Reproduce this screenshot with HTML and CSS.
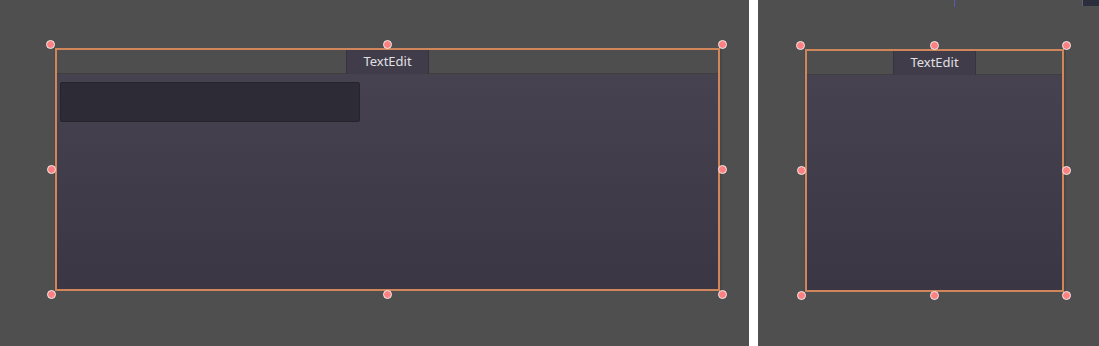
FILE: index.html
```html
<!DOCTYPE html>
<html lang="en">
<head>
<meta charset="UTF-8">
<title>TextEdit</title>
<link rel="stylesheet" href="styles.css">
</head>
<body>
<div class="editor">
    <div class="viewport left">
        <div class="control wide">
            <div class="tabs"><div class="tab">TextEdit</div></div>
            <div class="panel">
                <div class="line-edit"></div>
            </div>
            <span class="handle tl"></span><span class="handle tc"></span><span class="handle tr"></span>
            <span class="handle ml"></span><span class="handle mr"></span>
            <span class="handle bl"></span><span class="handle bc"></span><span class="handle br"></span>
        </div>
    </div>
    <div class="divider"></div>
    <div class="viewport right">
        <span class="guide"></span>
        <span class="corner-widget"></span>
        <div class="control narrow">
            <div class="tabs"><div class="tab">TextEdit</div></div>
            <div class="panel"></div>
            <span class="handle tl"></span><span class="handle tc"></span><span class="handle tr"></span>
            <span class="handle ml"></span><span class="handle mr"></span>
            <span class="handle bl"></span><span class="handle bc"></span><span class="handle br"></span>
        </div>
    </div>
</div>
</body>
</html>
```

FILE: styles.css
```css
html, body {
    margin: 0;
    padding: 0;
    background: #4f4f4f;
    font-family: "Noto Sans", "DejaVu Sans", sans-serif;
}
.editor {
    display: flex;
    width: 1099px;
    height: 346px;
    overflow: hidden;
}
.viewport {
    position: relative;
    background: #4f4f4f;
    box-sizing: border-box;
}
.viewport.left {
    width: 749px;
    padding: 48px 0 0 55px;
}
.viewport.right {
    flex: 1;
    padding: 49px 0 0 47px;
}
.divider {
    width: 9px;
    background: #ffffff;
}
.control {
    position: relative;
    box-sizing: border-box;
    height: 243px;
    border: 2px solid #d0855a;
    display: flex;
    flex-direction: column;
    box-shadow: 2px 0 0 #474747, -1px 0 0 #4a4a4a;
}
.control.wide {
    width: 665px;
}
.control.narrow {
    width: 259px;
}
.tabs {
    height: 23px;
    display: flex;
    justify-content: center;
    border-bottom: 1px solid #3f3f3f;
    background: #4e4e4e;
}
.tab {
    width: 83px;
    height: 24px;
    box-sizing: border-box;
    background: #403c49;
    border-left: 1px solid #36333e;
    border-right: 1px solid #36333e;
    color: #e0e0e4;
    font-size: 13px;
    line-height: 22px;
    text-align: center;
    position: relative;
    z-index: 1;
}
.panel {
    flex: 1;
    background: linear-gradient(#46424f, #3a3643);
}
.line-edit {
    width: 300px;
    height: 40px;
    box-sizing: border-box;
    margin: 8px 0 0 3px;
    background: #2d2b35;
    border: 1px solid #25232b;
    border-radius: 2px;
}
.handle {
    position: absolute;
    width: 7px;
    height: 7px;
    border-radius: 50%;
    background: #ff8080;
    border: 1px solid #ececec;
    z-index: 2;
}
.handle.tl { left: -11px; top: -10px; }
.handle.tc { left: 50%; top: -10px; margin-left: -5px; }
.handle.tr { right: -9px; top: -10px; }
.handle.ml { left: -10px; top: 50%; margin-top: -5px; }
.handle.mr { right: -9px; top: 50%; margin-top: -5px; }
.handle.bl { left: -10px; bottom: -10px; }
.handle.bc { left: 50%; bottom: -10px; margin-left: -5px; }
.handle.br { right: -9px; bottom: -10px; }
.guide {
    position: absolute;
    left: 196px;
    top: 0;
    width: 1px;
    height: 7px;
    background: #5a5ab8;
}
.corner-widget {
    position: absolute;
    left: 324px;
    top: 0;
    width: 17px;
    height: 6px;
    background: #2a2e3d;
    border-left: 1px solid #5d6272;
}
```
